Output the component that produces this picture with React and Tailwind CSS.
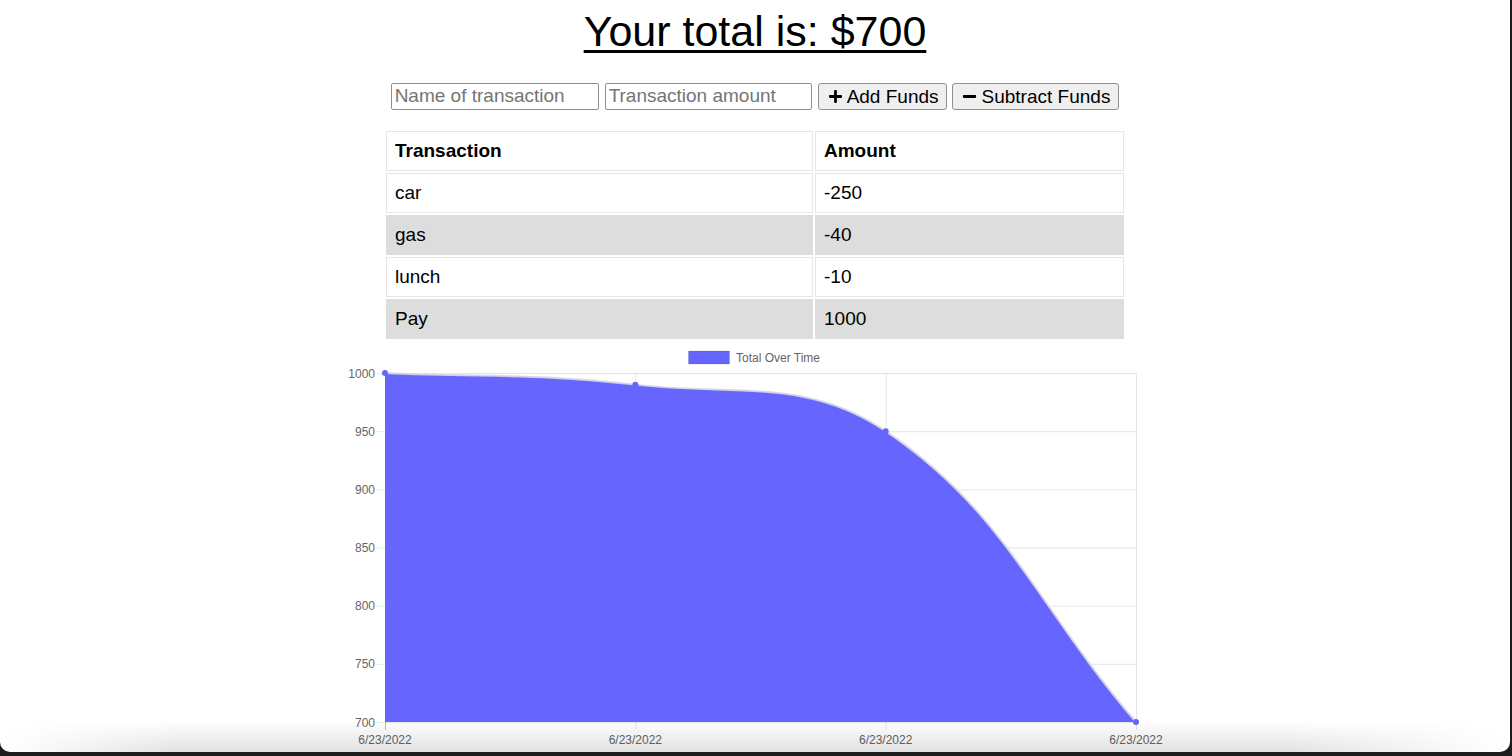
import React from "react";
import { FaPlus, FaMinus } from "react-icons/fa";

const rows = [
  { name: "car", amount: "-250", shade: false },
  { name: "gas", amount: "-40", shade: true },
  { name: "lunch", amount: "-10", shade: false },
  { name: "Pay", amount: "1000", shade: true },
];

function Chart() {
  const x0 = 80;
  const x3 = 831;
  const yTop = 32;
  const yBot = 381;
  const xs = [80, 330.33, 580.67, 831];
  const yTicks = [1000, 950, 900, 850, 800, 750, 700];
  const yOf = (v) => yTop + ((1000 - v) * (yBot - yTop)) / 300;
  const curve =
    "M80,32 C180.1,36.65 231,32.09 330.33,43.63 C431.26,55.36 500.77,36.33 580.67,90.17 C701.03,171.27 730.87,264.67 831,381";
  const pts = [
    [80, 32],
    [330.33, 43.63],
    [580.67, 90.17],
    [831, 381],
  ];
  return (
    <svg width="900" height="411" viewBox="0 0 900 411" className="block" style={{ fontFamily: '"Liberation Sans", Arial, sans-serif' }}>
      <rect x="383.5" y="10" width="41" height="13" fill="#6666ff" stroke="rgba(0,0,0,0.1)" strokeWidth="1" />
      <text x="431" y="20.7" fontSize="12" fill="#666">Total Over Time</text>

      {yTicks.map((v) => (
        <g key={v}>
          <line x1="72" x2={x3} y1={yOf(v) + 0.5} y2={yOf(v) + 0.5} stroke="rgba(0,0,0,0.1)" strokeWidth="1" />
          <text x="70" y={yOf(v) + 4.5} fontSize="12" fill="#666" textAnchor="end">{v}</text>
        </g>
      ))}
      {xs.map((x, i) => (
        <g key={i}>
          <line x1={x + 0.5} x2={x + 0.5} y1={yTop} y2={yBot + 8} stroke={i === 0 ? "rgba(0,0,0,0.25)" : "rgba(0,0,0,0.1)"} strokeWidth="1" />
          <text x={x} y="403" fontSize="12" fill="#666" textAnchor="middle">6/23/2022</text>
        </g>
      ))}

      <path d={`${curve} L${x3},${yBot} L${x0},${yBot} Z`} fill="#6666ff" />
      <path d={curve} fill="none" stroke="rgba(215,215,230,0.9)" strokeWidth="2" />
      {pts.map(([x, y], i) => (
        <circle key={i} cx={x} cy={y} r="3" fill="#6666ff" />
      ))}
    </svg>
  );
}

export default function App() {
  return (
    <div className="w-[1512px] h-[756px] bg-[#1c1c1c] overflow-hidden" style={{ fontFamily: '"Liberation Sans", Arial, Helvetica, sans-serif' }}>
      <div className="relative w-[1510px] h-[752px] bg-white rounded-b-[10px] overflow-hidden flex flex-col items-center">
        <h1 className="mt-[7px] text-[43px] leading-[49px] text-black underline decoration-[3px] underline-offset-[4px] font-normal">
          Your total is: $700
        </h1>

        <div className="mt-[27px] flex items-center gap-[6px] h-[27px]">
          <input
            type="text"
            placeholder="Name of transaction"
            className="w-[208px] h-[27px] border border-[#8f8f8f] rounded-[2px] px-[3px] text-[19px] text-black placeholder:text-[#757575] outline-none bg-white"
          />
          <input
            type="number"
            placeholder="Transaction amount"
            className="w-[207px] h-[27px] border border-[#8f8f8f] rounded-[2px] px-[3px] text-[19px] text-black placeholder:text-[#757575] outline-none bg-white"
          />
          <button className="h-[27px] flex items-center gap-[5px] pl-[10px] pr-[7px] bg-[#efefef] border border-[#8f8f8f] rounded-[3px] text-[19px] text-black leading-none">
            <FaPlus className="w-[13px] h-[15px]" />
            <span>Add Funds</span>
          </button>
          <button className="h-[27px] flex items-center gap-[5px] pl-[9px] pr-[8px] -ml-[1px] bg-[#efefef] border border-[#8f8f8f] rounded-[3px] text-[19px] text-black leading-none">
            <FaMinus className="w-[15px] h-[15px]" />
            <span>Subtract Funds</span>
          </button>
        </div>

        <table className="mt-[19px] border-separate border-spacing-[2px] table-fixed text-[19px] text-black">
          <thead>
            <tr>
              <th className="w-[427px] h-[40px] pt-[1px] border border-[#e6e6e6] text-left font-bold px-[8px]">Transaction</th>
              <th className="w-[309px] h-[40px] pt-[1px] border border-[#e6e6e6] text-left font-bold px-[8px]">Amount</th>
            </tr>
          </thead>
          <tbody>
            {rows.map((r) => (
              <tr key={r.name} className={r.shade ? "bg-[#dddddd]" : "bg-white"}>
                <td className={`h-[40px] pt-[1px] px-[8px] border ${r.shade ? "border-[#dddddd]" : "border-[#e6e6e6]"}`}>{r.name}</td>
                <td className={`h-[40px] pt-[1px] px-[8px] border ${r.shade ? "border-[#dddddd]" : "border-[#e6e6e6]"}`}>{r.amount}</td>
              </tr>
            ))}
          </tbody>
        </table>

        <Chart />

        <div className="pointer-events-none absolute left-0 right-0 bottom-0 h-[30px] bg-[linear-gradient(to_bottom,rgba(0,0,0,0),rgba(0,0,0,0.12))] [mask-image:linear-gradient(to_right,transparent,black_12%,black_85%,transparent)]" />
      </div>
    </div>
  );
}
